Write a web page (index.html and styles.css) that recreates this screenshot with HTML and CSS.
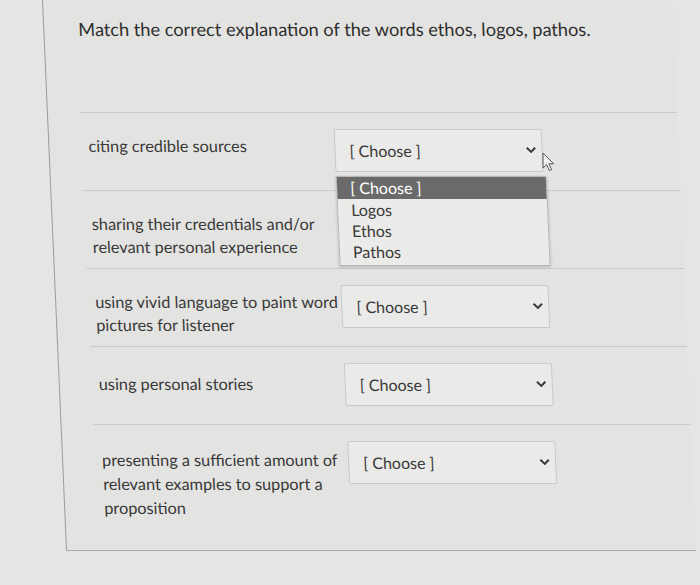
FILE: index.html
```html
<!DOCTYPE html>
<html lang="en">
<head>
<meta charset="utf-8">
<title>Matching question</title>
<link rel="stylesheet" href="styles.css">
</head>
<body>
<div class="sheet">
  <div class="question">
    <div class="title">Match the correct explanation of the words ethos, logos, pathos.</div>
    <div class="answers">
      <div class="row">
        <div class="label">citing credible sources</div>
        <div class="select open">
          <span class="value">[ Choose ]</span>
          <svg class="chev" width="11" height="8" viewBox="0 0 11 8"><path d="M1.3 1.8 L5.5 5.9 L9.7 1.8" fill="none" stroke="#383838" stroke-width="2"/></svg>
          <ul class="menu">
            <li class="hl">[ Choose ]</li>
            <li>Logos</li>
            <li>Ethos</li>
            <li>Pathos</li>
          </ul>
        </div>
      </div>
      <div class="row">
        <div class="label">sharing their credentials and/or relevant personal experience</div>
        <div class="select">
          <span class="value">[ Choose ]</span>
          <svg class="chev" width="11" height="8" viewBox="0 0 11 8"><path d="M1.3 1.8 L5.5 5.9 L9.7 1.8" fill="none" stroke="#383838" stroke-width="2"/></svg>
        </div>
      </div>
      <div class="row">
        <div class="label">using vivid language to paint word pictures for listener</div>
        <div class="select">
          <span class="value">[ Choose ]</span>
          <svg class="chev" width="11" height="8" viewBox="0 0 11 8"><path d="M1.3 1.8 L5.5 5.9 L9.7 1.8" fill="none" stroke="#383838" stroke-width="2"/></svg>
        </div>
      </div>
      <div class="row low">
        <div class="label">using personal stories</div>
        <div class="select">
          <span class="value">[ Choose ]</span>
          <svg class="chev" width="11" height="8" viewBox="0 0 11 8"><path d="M1.3 1.8 L5.5 5.9 L9.7 1.8" fill="none" stroke="#383838" stroke-width="2"/></svg>
        </div>
      </div>
      <div class="row last">
        <div class="label">presenting a sufficient amount of relevant examples to support a proposition</div>
        <div class="select">
          <span class="value">[ Choose ]</span>
          <svg class="chev" width="11" height="8" viewBox="0 0 11 8"><path d="M1.3 1.8 L5.5 5.9 L9.7 1.8" fill="none" stroke="#383838" stroke-width="2"/></svg>
        </div>
      </div>
    </div>
  </div>
</div>
<svg class="cursor" width="14" height="20" viewBox="0 0 14 20"><path d="M1 1 L1 16 L4.6 12.6 L7.4 18.6 L9.6 17.6 L6.9 11.8 L11.6 11.8 Z" fill="#f2f2f2" stroke="#555" stroke-width="1" stroke-linejoin="round"/></svg>
</body>
</html>
```

FILE: styles.css
```css
html, body {
  margin: 0;
  padding: 0;
}
body {
  width: 700px;
  height: 585px;
  overflow: hidden;
  background: #e5e5e3;
  font-family: Lato, "Liberation Sans", sans-serif;
  color: #363636;
  position: relative;
}
.sheet {
  width: 672px;
  height: 585px;
  overflow: hidden;
  transform: skewX(2.5deg);
  transform-origin: 0 0;
}
.question {
  margin-left: 42px;
  width: 630px;
  height: 551px;
  box-sizing: border-box;
  background: #e3e3e1;
  border-left: 1px solid #9c9c9a;
  border-bottom: 1px solid #a9a9a7;
}
.title {
  padding: 16px 0 0 34px;
  font-size: 18.2px;
  line-height: 26px;
  color: #2e2e2e;
}
.answers {
  margin: 70px 0 0 32px;
  width: 598px;
  border-top: 1px solid #c9c9c7;
}
.row {
  display: flex;
  align-items: flex-start;
  height: 61px;
  padding: 16px 0 0 7px;
  border-bottom: 1px solid #c9c9c7;
}
.row.last {
  border-bottom: none;
}
.label {
  width: 246px;
  flex: none;
  padding-top: 5px;
  font-size: 16.3px;
  line-height: 23px;
  color: #393939;
}
.row.low .label {
  padding-top: 9px;
}
.row.last .label {
  padding-top: 7px;
  line-height: 24px;
}
.select {
  position: relative;
  flex: none;
  width: 208px;
  height: 43px;
  box-sizing: border-box;
  border: 1px solid #c9c9c7;
  border-radius: 2px;
  background: #eaeae8;
  display: flex;
  align-items: center;
  padding-left: 14px;
  font-size: 16px;
  color: #3a3a3a;
}
.value {
  flex: 1;
}
.chev {
  margin-right: 5px;
  margin-top: -2px;
}
.menu {
  position: absolute;
  left: -1px;
  top: 46px;
  width: 209px;
  margin: 0;
  padding: 0 0 3px 0;
  list-style: none;
  background: #ebebe9;
  border: 1px solid #b8b8b6;
  box-shadow: 0 1px 3px rgba(0, 0, 0, 0.22);
  z-index: 5;
}
.menu li {
  padding-left: 13px;
  line-height: 21px;
  font-size: 16px;
  color: #3a3a3a;
}
.menu li.hl {
  background: #6a6a6a;
  color: #ffffff;
  line-height: 22px;
}
.cursor {
  position: absolute;
  left: 542px;
  top: 152px;
}
```
